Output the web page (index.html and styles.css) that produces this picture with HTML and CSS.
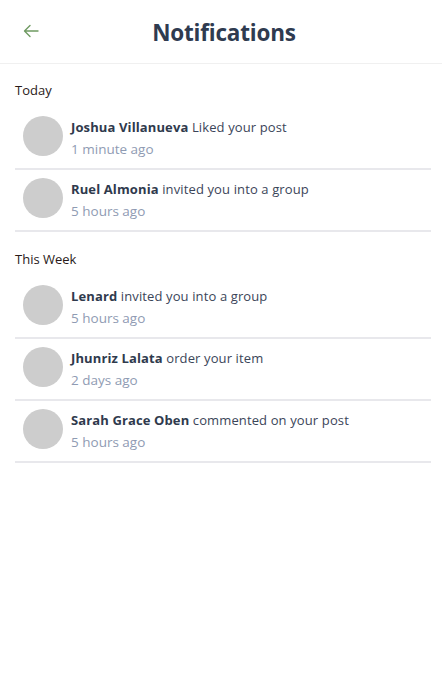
FILE: index.html
```html
<!DOCTYPE html>
<html>
<head>
<meta charset="utf-8">
<link rel="stylesheet" href="styles.css">
</head>
<body>
<div class="app">
  <header class="header">
    <button class="back" aria-label="Back">
      <svg width="16" height="14" viewBox="0 0 16 14" fill="none" stroke="#6f9a62" stroke-width="1.4" stroke-linecap="round" stroke-linejoin="round"><path d="M15 7H2M7 1.5L1.5 7L7 12.5"/></svg>
    </button>
    <h1 class="title">Notifications</h1>
  </header>
  <main class="content">
    <section class="group">
      <h2 class="group-title">Today</h2>
      <ul class="list">
        <li class="item">
          <div class="avatar"></div>
          <div class="text">
            <p class="msg"><b>Joshua Villanueva</b> Liked your post</p>
            <p class="time">1 minute ago</p>
          </div>
        </li>
        <li class="item">
          <div class="avatar"></div>
          <div class="text">
            <p class="msg"><b>Ruel Almonia</b> invited you into a group</p>
            <p class="time">5 hours ago</p>
          </div>
        </li>
      </ul>
    </section>
    <section class="group">
      <h2 class="group-title">This Week</h2>
      <ul class="list">
        <li class="item">
          <div class="avatar"></div>
          <div class="text">
            <p class="msg"><b>Lenard</b> invited you into a group</p>
            <p class="time">5 hours ago</p>
          </div>
        </li>
        <li class="item">
          <div class="avatar"></div>
          <div class="text">
            <p class="msg"><b>Jhunriz Lalata</b> order your item</p>
            <p class="time">2 days ago</p>
          </div>
        </li>
        <li class="item">
          <div class="avatar"></div>
          <div class="text">
            <p class="msg"><b>Sarah Grace Oben</b> commented on your post</p>
            <p class="time">5 hours ago</p>
          </div>
        </li>
      </ul>
    </section>
  </main>
</div>
</body>
</html>
```
FILE: styles.css
```css
* { box-sizing: border-box; }
html, body { margin: 0; padding: 0; background: #fff; }
body { font-family: "Open Sans", "Noto Sans", sans-serif; color: #2f3a4d; }
.header {
  position: relative;
  height: 64px;
  display: flex;
  align-items: center;
  justify-content: center;
  border-bottom: 1px solid #f0f0f0;
}
.back {
  position: absolute;
  left: 23px;
  top: 24px;
  padding: 0;
  border: 0;
  background: none;
  display: flex;
}
.title {
  margin: 0;
  padding: 1px 0 0 6px;
  font-size: 22.5px;
  font-weight: 700;
  color: #2f3b50;
  letter-spacing: -0.2px;
}
.content { padding: 15px 11px 0 15px; }
.group-title {
  margin: 0 0 7px;
  font-size: 13px;
  font-weight: 500;
  color: #2a1a18;
  line-height: 22px;
}
.group + .group { margin-top: 16px; }
.list { list-style: none; margin: 0; padding: 0; }
.item {
  display: flex;
  align-items: flex-start;
  padding: 8px 0 9px 8px;
  border-bottom: 2px solid #e8e8ec;
}
.avatar {
  width: 40px;
  height: 40px;
  border-radius: 50%;
  background: #cdcdcd;
  flex: none;
}
.text { margin: 1px 0 0 8px; }
.msg {
  margin: 0;
  font-size: 13px;
  line-height: 20px;
  letter-spacing: 0.12px;
  color: #3b4559;
}
.msg b { font-weight: 700; color: #2f3a4d; }
.time {
  margin: 2px 0 0;
  font-size: 13.5px;
  line-height: 20px;
  color: #8f9bb3;
}
```
